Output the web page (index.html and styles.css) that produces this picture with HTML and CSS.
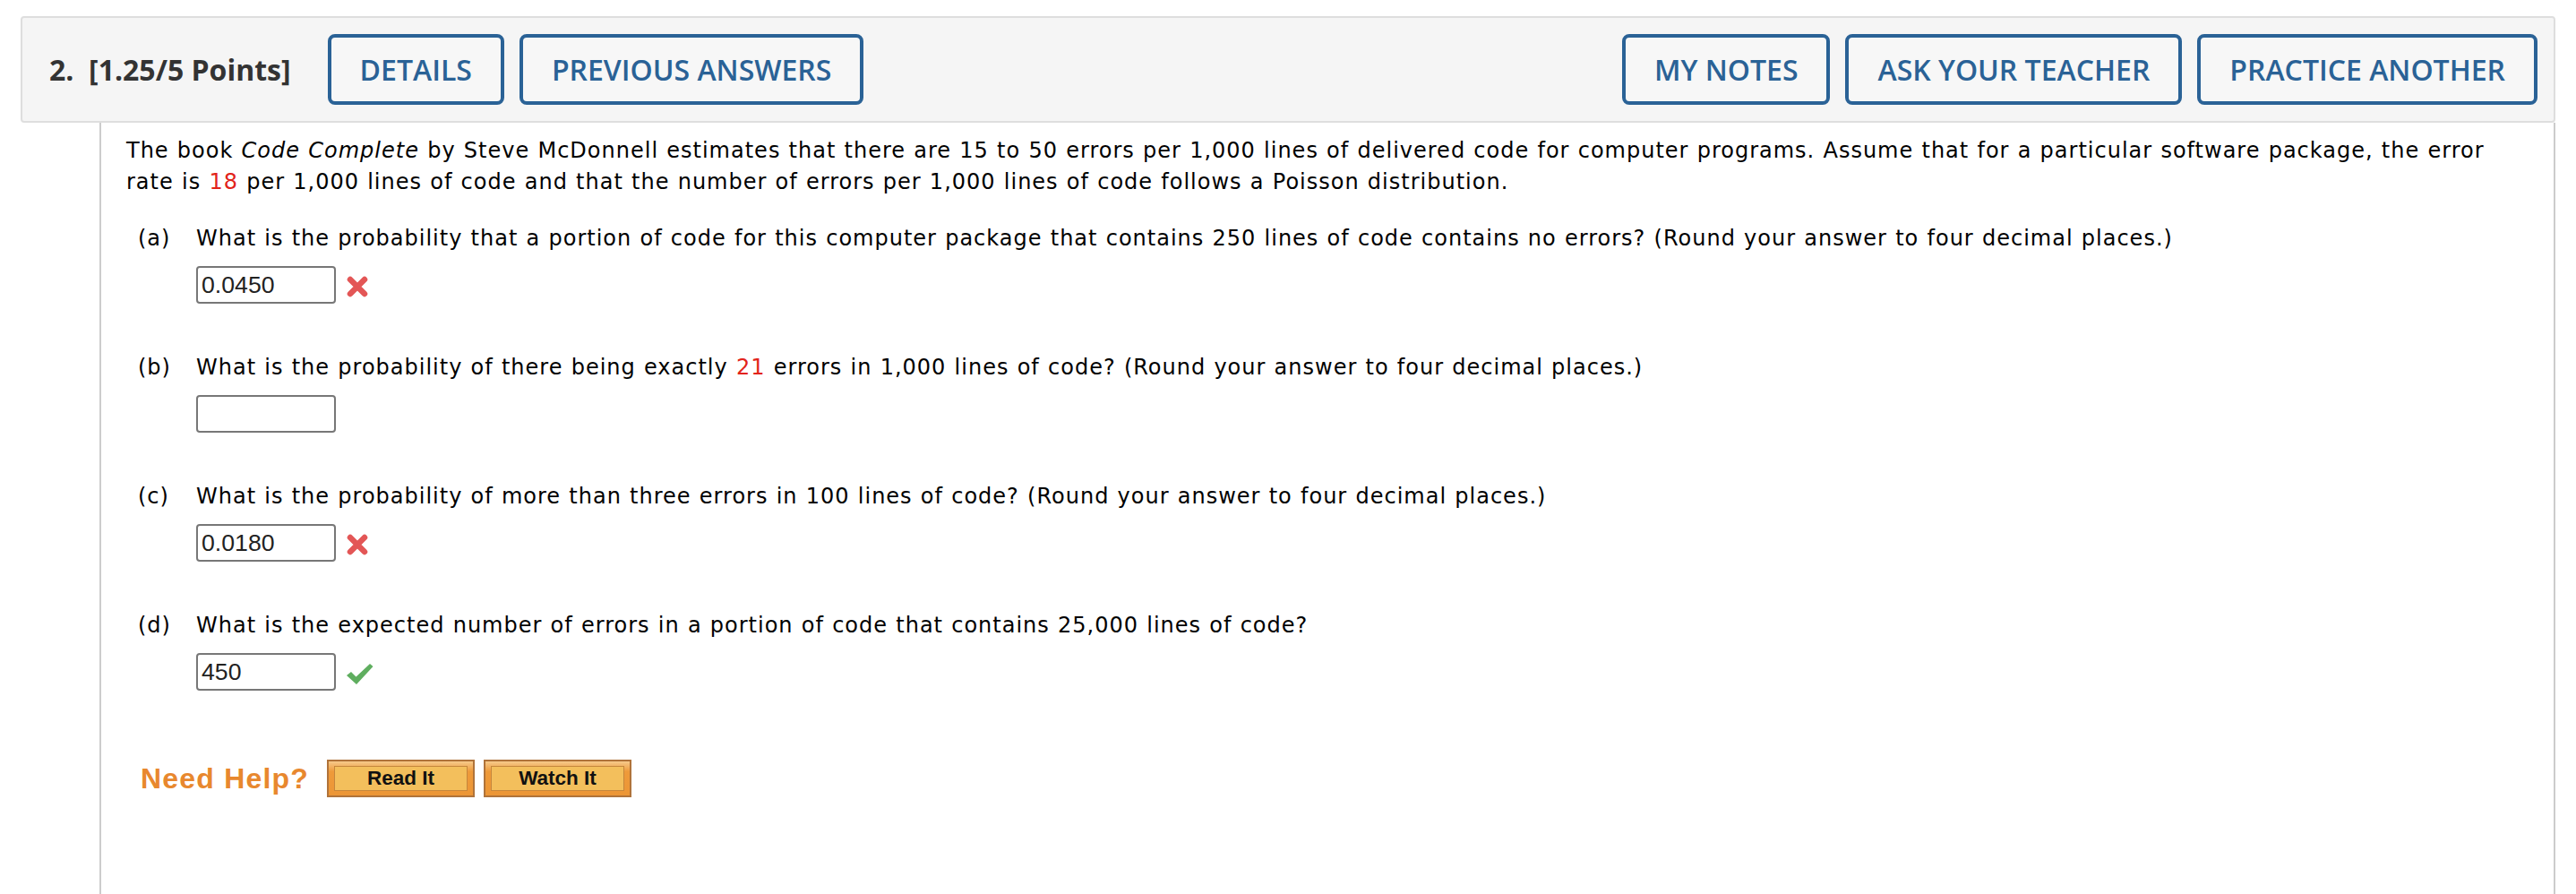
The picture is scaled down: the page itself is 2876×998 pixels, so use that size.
FILE: index.html
```html
<!DOCTYPE html>
<html>
<head>
<meta charset="utf-8">
<link rel="stylesheet" href="styles.css">
<title>Question 2</title>
</head>
<body>
<div class="page">
  <div class="qhead">
    <div class="qtitle">2.&nbsp; [1.25/5 Points]</div>
    <div class="btn">DETAILS</div>
    <div class="btn">PREVIOUS ANSWERS</div>
    <div class="btn push">MY NOTES</div>
    <div class="btn">ASK YOUR TEACHER</div>
    <div class="btn">PRACTICE ANOTHER</div>
  </div>
  <div class="qbody">
    <p class="intro">The book <i>Code Complete</i> by Steve McDonnell estimates that there are 15 to 50 errors per 1,000 lines of delivered code for computer programs. Assume that for a particular software package, the error rate is <span class="red">18</span> per 1,000 lines of code and that the number of errors per 1,000 lines of code follows a Poisson distribution.</p>

    <div class="part">
      <div class="qline"><span class="lbl">(a)</span><span>What is the probability that a portion of code for this computer package that contains 250 lines of code contains no errors? (Round your answer to four decimal places.)</span></div>
      <div class="ans"><div class="box">0.0450</div>
        <svg class="mark" width="26" height="26" viewBox="0 0 26 26"><path d="M5 5 L21 21 M21 5 L5 21" stroke="#e35656" stroke-width="6.5" stroke-linecap="round" fill="none"/></svg>
      </div>
    </div>

    <div class="part">
      <div class="qline"><span class="lbl">(b)</span><span>What is the probability of there being exactly <span class="red">21</span> errors in 1,000 lines of code? (Round your answer to four decimal places.)</span></div>
      <div class="ans"><div class="box"></div></div>
    </div>

    <div class="part">
      <div class="qline"><span class="lbl">(c)</span><span>What is the probability of more than three errors in 100 lines of code? (Round your answer to four decimal places.)</span></div>
      <div class="ans"><div class="box">0.0180</div>
        <svg class="mark" width="26" height="26" viewBox="0 0 26 26"><path d="M5 5 L21 21 M21 5 L5 21" stroke="#e35656" stroke-width="6.5" stroke-linecap="round" fill="none"/></svg>
      </div>
    </div>

    <div class="part">
      <div class="qline"><span class="lbl">(d)</span><span>What is the expected number of errors in a portion of code that contains 25,000 lines of code?</span></div>
      <div class="ans"><div class="box">450</div>
        <svg class="mark check" width="31" height="25" viewBox="0 0 31 25"><path d="M1 14 L6 10 L11.5 15.5 L27 1 L30.5 4 L12 24 Z" fill="#5fae5f"/></svg>
      </div>
    </div>

    <div class="help">
      <span class="needhelp">Need Help?</span>
      <div class="hbtn"><div class="hin">Read It</div></div>
      <div class="hbtn"><div class="hin">Watch It</div></div>
    </div>
  </div>
</div>
</body>
</html>
```

FILE: styles.css
```css
html, body {
  margin: 0;
  padding: 0;
  background: #ffffff;
}
.page {
  padding: 18px 23px 0 23px;
}
.qhead {
  display: flex;
  align-items: center;
  gap: 17px;
  background: #f5f5f5;
  border: 2px solid #dedede;
  border-radius: 4px;
  padding: 18px 18px 18px 30px;
  font-family: "Open Sans", sans-serif;
}
.qtitle {
  font-size: 32px;
  font-weight: 700;
  color: #333333;
  margin-right: 24px;
  white-space: pre;
}
.btn {
  box-sizing: border-box;
  height: 79px;
  display: flex;
  align-items: center;
  padding: 0 32px;
  border: 4px solid #2a6296;
  border-radius: 8px;
  color: #2a6296;
  font-size: 32px;
  font-weight: 600;
  white-space: nowrap;
  background: #f7f7f7;
}
.push {
  margin-left: auto;
}
.qbody {
  margin-left: 88px;
  border-left: 2px solid #cccccc;
  border-right: 2px solid #cccccc;
  min-height: calc(100vh - 137px);
  box-sizing: border-box;
  padding: 14px 36px 0 28px;
  font-family: "DejaVu Sans", Verdana, sans-serif;
  font-size: 24px;
  line-height: 35px;
  letter-spacing: 1px;
  word-spacing: 0.6px;
  color: #000000;
}
.intro {
  margin: 0;
}
.red {
  color: #e2231a;
}
.part {
  margin-top: 28px;
  margin-left: 13px;
}
.part + .part {
  margin-top: 54px;
}
.qline {
  display: flex;
}
.lbl {
  width: 65px;
  flex: none;
}
.ans {
  display: flex;
  align-items: center;
  margin-top: 13px;
  margin-left: 65px;
  height: 42px;
}
.box {
  box-sizing: border-box;
  width: 156px;
  height: 42px;
  border: 2px solid #777777;
  border-radius: 4px;
  padding: 0 4px;
  font-family: "Liberation Sans", Arial, sans-serif;
  font-size: 26.67px;
  line-height: 38px;
  letter-spacing: 0;
  word-spacing: 0;
  color: #222222;
}
.mark {
  margin-left: 11px;
  margin-top: 4px;
}
.help {
  display: flex;
  align-items: center;
  margin-top: 77px;
  margin-left: 16px;
  gap: 10px;
  letter-spacing: 0;
  word-spacing: 0;
}
.needhelp {
  font-family: "Liberation Sans", Arial, sans-serif;
  font-size: 32px;
  font-weight: 700;
  color: #e8882e;
  letter-spacing: 1.2px;
  margin-right: 10px;
}
.hbtn {
  box-sizing: border-box;
  width: 165px;
  height: 42px;
  border: 2px solid #b0733a;
  background: linear-gradient(#f6c98a, #ee9a3a 30%, #ec9636);
  padding: 5px 6px;
}
.hin {
  box-sizing: border-box;
  height: 100%;
  border: 1px solid #c5863c;
  background: #f3bf5c;
  font-family: "Liberation Sans", Arial, sans-serif;
  font-weight: 700;
  font-size: 22.5px;
  line-height: 26px;
  text-align: center;
  color: #111111;
}
```
